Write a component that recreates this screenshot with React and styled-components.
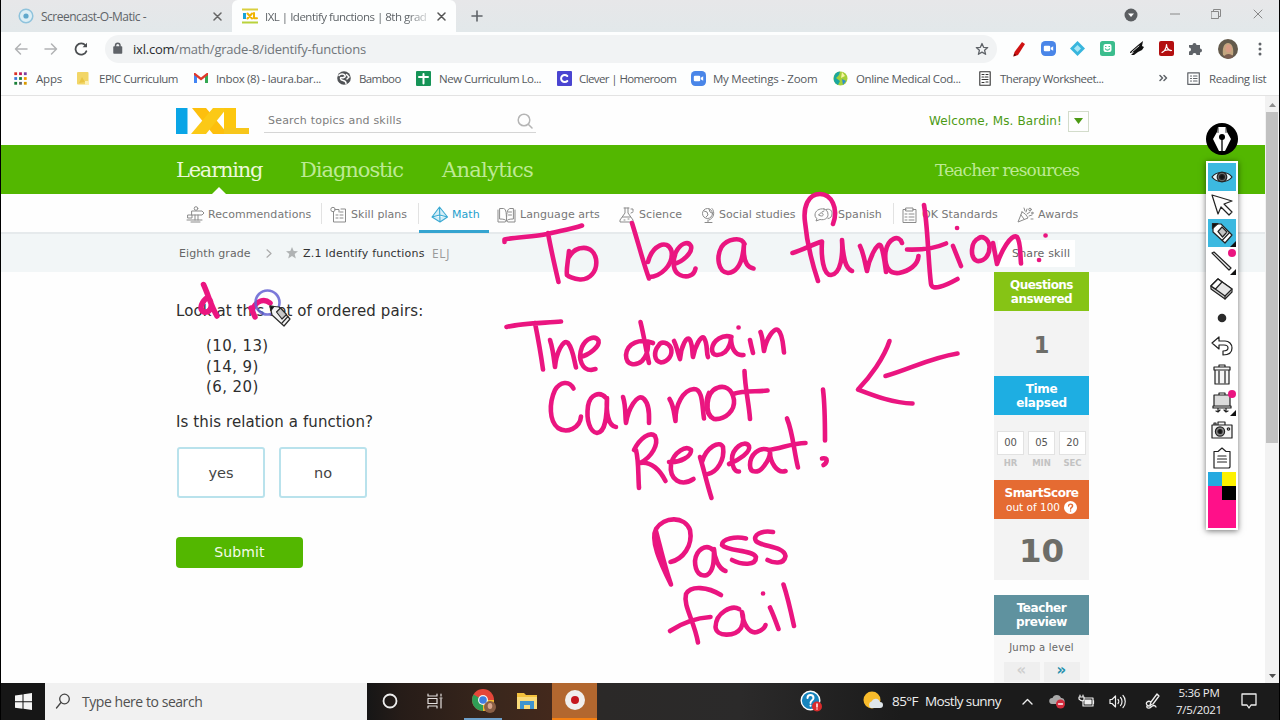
import React from "react";
import styled, { createGlobalStyle, css } from "styled-components";

const Global = createGlobalStyle`
  * { box-sizing: border-box; }
  html, body { margin: 0; padding: 0; background: #fff; overflow: hidden; }
  svg { display: block; flex: none; }
  button, input { font: inherit; }
`;

const chromeFont = `"Open Sans", "Noto Sans", sans-serif`;
const pageFont = `"DejaVu Sans", Verdana, sans-serif`;
const slabFont = `"DejaVu Serif", "Roboto Slab", serif`;
const pink = "#ea1580";

const Frame = styled.div`
  position: relative;
  display: flex;
  flex-direction: column;
  width: 1280px;
  height: 720px;
  border: solid #000;
  border-width: 0 1px;
  overflow: hidden;
  background: #fefefe;
  white-space: nowrap;
`;

/* ---------- browser chrome ---------- */

const TabStrip = styled.div`
  display: flex;
  height: 32px;
  flex: none;
  background: linear-gradient(#e7e7e9, #e2e8ea);
  font-family: ${chromeFont};
  font-size: 12px;
  color: #5f6468;
`;

const Tab = styled.div`
  display: flex;
  align-items: center;
  width: ${(p) => p.$w}px;
  padding: 0 10px 0 ${(p) => p.$pl}px;
  gap: 7px;
  font-size: ${(p) => p.$size || 12}px;
  letter-spacing: ${(p) => p.$ls || 0}px;
  ${(p) => p.$active && css`background: #fdfefe; border-radius: 6px 6px 0 0;`}
`;

const TabTitle = styled.span`
  flex: 1;
  ${(p) => p.$fade && css`mask-image: linear-gradient(90deg, #000 86%, rgba(0, 0, 0, 0.25) 98%);`}
`;

const NewTab = styled.div`
  display: flex;
  align-items: center;
  padding-left: 15px;
  flex: 1;
`;

const WindowButtons = styled.div`
  display: flex;
  align-items: center;
  justify-content: space-between;
  width: 155px;
  padding-right: 16px;
  height: 28px;
`;

const Toolbar = styled.div`
  display: flex;
  align-items: center;
  height: 33px;
  flex: none;
  padding-left: 13px;
  background: #fdfefe;
`;

const NavIcons = styled.div`
  display: flex;
  align-items: center;
  gap: 16px;
  width: 91px;
`;

const AddressBar = styled.div`
  display: flex;
  align-items: center;
  width: 892px;
  height: 28px;
  border-radius: 14px;
  background: #f1f3f4;
  padding: 0 8px 0 8px;
  gap: 10px;
  font-family: ${chromeFont};
  font-size: 13px;
  letter-spacing: -0.22px;
  color: #70757a;
`;

const Url = styled.span`
  flex: 1;
  b { font-weight: 400; color: #2a2d30; }
`;

const Extensions = styled.div`
  display: flex;
  align-items: center;
  justify-content: space-between;
  width: 271px;
  padding-left: 16px;
`;

const Bookmarks = styled.div`
  display: flex;
  align-items: center;
  height: 31px;
  flex: none;
  padding-left: 13px;
  background: #fdfefe;
  border-bottom: 1px solid #e3e3e3;
  padding-bottom: 4px;
  font-family: ${chromeFont};
  font-size: 11.5px;
  color: #55595d;
`;

const Bookmark = styled.div`
  display: flex;
  align-items: center;
  width: ${(p) => p.$w}px;
  letter-spacing: ${(p) => p.$ls || 0}px;
`;

const BookmarkIcon = styled.span`
  width: ${(p) => p.$w}px;
  flex: none;
`;

/* ---------- site ---------- */

const Viewport = styled.div`
  display: flex;
  flex: 1;
  min-height: 0;
  background: #fefefe;
`;

const Page = styled.main`
  flex: 1;
  display: flex;
  flex-direction: column;
  min-width: 0;
  font-family: ${pageFont};
  font-size: 11px;
  color: #666;
`;

const SiteHeader = styled.header`
  display: flex;
  height: 49px;
  flex: none;
  padding: 12px 0 0 175px;
`;

const SearchField = styled.div`
  display: flex;
  align-items: center;
  justify-content: space-between;
  width: 272px;
  height: 25px;
  margin-left: 15px;
  padding: 1px 3px 0 4px;
  border-bottom: 1px solid #d5d5d5;
  color: #7d7d7d;
  letter-spacing: 0.2px;
`;

const Welcome = styled.div`
  display: flex;
  align-items: center;
  gap: 6px;
  height: 26px;
  margin-left: 393px;
  font-size: 12px;
  letter-spacing: 0.13px;
  color: #4c9a14;
`;

const DropButton = styled.span`
  display: grid;
  place-items: center;
  width: 21px;
  height: 21px;
  border: 1px solid #d3dccb;
`;

const GreenNav = styled.nav`
  display: flex;
  height: 49px;
  flex: none;
  padding-left: 175px;
  background: #53b700;
  font-family: ${slabFont};
`;

const GreenLink = styled.a`
  display: flex;
  flex-direction: column;
  align-items: flex-start;
  justify-content: space-between;
  width: ${(p) => p.$w}px;
  padding-top: 12px;
  font-size: ${(p) => p.$size || 21}px;
  letter-spacing: ${(p) => p.$ls}px;
  line-height: 27px;
  color: ${(p) => (p.$active ? "#ecf8da" : "#bdea94")};
`;

const Caret = styled.i`
  margin-left: 36px;
  border: solid transparent;
  border-width: 0 7px 7px;
  border-bottom-color: #fefefe;
`;

const SubjectNav = styled.nav`
  display: flex;
  align-items: stretch;
  height: 40px;
  flex: none;
  padding-left: 174px;
  border-bottom: 2px solid #e6eaec;
  letter-spacing: 0.06px;
`;

const Subject = styled.a`
  display: flex;
  align-items: center;
  width: ${(p) => p.$w}px;
  padding: 2px 0 0 ${(p) => p.$pl}px;
  gap: ${(p) => p.$gap}px;
  height: 39px;
  color: #777;
  background: ${(p) => (p.$divider ? "linear-gradient(#e2e2e2,#e2e2e2) right 9px / 1px 21px no-repeat" : "none")};
  ${(p) => p.$active && css`color: #25a0cd; border-bottom: 3px solid #35a4d0; padding-top: 4px;`}
`;

const CrumbBar = styled.div`
  display: flex;
  align-items: center;
  height: 38px;
  flex: none;
  padding-left: 178px;
  background: #f2f6f7;
  color: #666;
`;

const SkillName = styled.span`
  width: 129px;
  color: #333;
  letter-spacing: 0.2px;
`;

const SkillCode = styled.span`
  width: 566px;
  font-family: ${chromeFont};
  font-size: 12px;
  letter-spacing: 0.6px;
  color: #999;
`;

const ShareSkill = styled.span`
  display: flex;
  align-items: center;
  height: 27px;
  padding: 0 5px 0 14px;
  background: #fff;
  letter-spacing: 0.15px;
`;

const Body = styled.div`
  display: flex;
  flex: 1;
  min-height: 0;
  padding-left: 175px;
`;

const Question = styled.section`
  width: 818px;
  padding-top: 29px;
  font-size: 15px;
  line-height: 21px;
  letter-spacing: 0.1px;
  color: #2e2e2e;
`;

const Pairs = styled.ul`
  list-style: none;
  margin: 14px 0;
  padding-left: 30px;
  line-height: 20.6px;
  letter-spacing: 0.4px;
`;

const Answers = styled.div`
  display: flex;
  gap: 14px;
  margin: 14px 0 39px 1px;
`;

const Answer = styled.button`
  width: 88px;
  height: 51px;
  border: 2px solid #b9e2ec;
  border-radius: 3px;
  background: #fff;
  padding: 2px 0 0;
  color: #444;
  font-size: 14.5px;
`;

const Submit = styled.button`
  width: 127px;
  height: 31px;
  border: 0;
  border-radius: 4px;
  background: #53b700;
  color: #f4fbe9;
  padding: 1px 0 0;
  font-size: 14px;
  letter-spacing: 0.1px;
`;

const Stats = styled.aside`
  width: 95px;
  display: flex;
  flex-direction: column;
  text-align: center;
`;

const StatHead = styled.div`
  height: ${(p) => p.$h || 39}px;
  flex: none;
  padding-top: 6px;
  background: ${(p) => p.$bg};
  color: #fff;
  font-weight: 700;
  font-size: 12px;
  letter-spacing: ${(p) => p.$ls || -0.55}px;
  line-height: 14px;
`;

const OutOf = styled.div`
  display: flex;
  justify-content: center;
  align-items: center;
  gap: 4px;
  font-weight: 400;
  font-size: 10.5px;
  letter-spacing: 0;
`;

const StatBody = styled.div`
  display: flex;
  justify-content: center;
  align-items: center;
  height: ${(p) => p.$h}px;
  flex: none;
  margin-bottom: ${(p) => p.$mb || 0}px;
  background: #f3f3f3;
  color: #6d6d68;
  font-weight: 700;
  font-size: ${(p) => p.$size}px;
  padding-top: 3px;
`;

const Timer = styled.div`
  display: flex;
  gap: 4px;
  padding-top: 5px;
`;

const TimeUnit = styled.div`
  width: 27px;
  font-size: 8.5px;
  color: #c2c2c2;
  line-height: 17px;
`;

const TimeBox = styled.div`
  height: 24px;
  border: 1px solid #e2e2e2;
  background: #fff;
  font-size: 10px;
  line-height: 22px;
  font-weight: 400;
  color: #555;
`;

const Jump = styled.div`
  flex: 1;
  background: #f7f7f7;
  padding-top: 6px;
  font-size: 10px;
  line-height: 14px;
  letter-spacing: 0.25px;
`;

const JumpButtons = styled.div`
  display: flex;
  gap: 4px;
  justify-content: center;
  margin-top: 7px;
`;

const JumpButton = styled.span`
  width: 36px;
  height: 20px;
  background: #efefef;
  color: ${(p) => p.$c};
  font-weight: 700;
  font-size: 15px;
  line-height: 16px;
`;

const Scrollbar = styled.div`
  display: flex;
  flex-direction: column;
  align-items: center;
  width: 14px;
  background: #f2f2f2;
  padding: 7px 0 5px;
`;

const Thumb = styled.div`
  width: 12px;
  height: 331px;
  margin: 5px 0 auto;
  background: #c1c1c1;
`;

/* ---------- annotation layer ---------- */

const Ink = styled.svg`
  position: absolute;
  left: -1px;
  top: 0;
  width: 1280px;
  height: 720px;
  pointer-events: none;
`;

const PenDock = styled.div`
  position: absolute;
  left: 1205px;
  top: 123px;
  display: flex;
  flex-direction: column;
  align-items: center;
  gap: 6px;
`;

const ToolPanel = styled.div`
  width: 32px;
  padding: 2px;
  background: #fff;
  box-shadow: 0 1px 6px rgba(0, 0, 0, 0.55);
`;

const Tool = styled.div`
  position: relative;
  display: grid;
  place-items: center;
  height: 28.1px;
  background: ${(p) => (p.$on ? "#3cb9e0" : "#fff")};
  ${(p) => p.$more && css`
    &::after {
      content: "";
      position: absolute;
      right: 0;
      bottom: 0;
      border: 3px solid #111;
      border-top-color: transparent;
      border-left-color: transparent;
    }
  `}
  ${(p) => p.$dot && css`
    &::before {
      content: "";
      position: absolute;
      right: 0;
      top: 2px;
      width: 8px;
      height: 8px;
      border-radius: 50%;
      background: ${pink};
    }
  `}
`;

const Palette = styled.div`
  display: grid;
  grid-template: 14px 14px 28px / 14px 14px;
  background: #ff1089;
`;

const Swatch = styled.i`
  background: ${(p) => p.$c};
`;

/* ---------- taskbar ---------- */

const Taskbar = styled.footer`
  display: flex;
  height: 37.5px;
  flex: none;
  background: linear-gradient(90deg, #161616 0, #161616 366px, #261c18 400px, #3b271c 500px, #45291c 560px, #2b2928 600px, #2b2a2a 740px, #1b1b1b 900px);
  font-family: ${chromeFont};
  color: #eee;
`;

const Start = styled.div`
  display: grid;
  place-items: center;
  width: 44px;
`;

const TaskSearch = styled.div`
  display: flex;
  align-items: center;
  gap: 11px;
  width: 322px;
  padding-left: 10px;
  background: #f1f1f1;
  color: #505050;
  font-size: 14px;
  letter-spacing: -0.45px;
`;

const TaskApp = styled.div`
  display: grid;
  place-items: center;
  width: ${(p) => p.$w}px;
  background: ${(p) => p.$bg || "none"};
  border-bottom: ${(p) => (p.$bar ? `2px solid ${p.$bar}` : "0")};
`;

const Tray = styled.div`
  display: flex;
  align-items: center;
  margin-left: auto;
  padding-right: 22px;
  font-size: 13.5px;
`;

const Slot = styled.div`
  display: flex;
  justify-content: ${(p) => p.$j || "flex-start"};
  width: ${(p) => p.$w}px;
  letter-spacing: ${(p) => p.$ls || 0}px;
`;

const Clock = styled.div`
  width: 61px;
  padding-left: 3px;
  text-align: center;
  font-size: 11.5px;
  letter-spacing: -0.25px;
  line-height: 17px;
`;

/* ---------- drawings ---------- */

const S = ({ w = 16, h = w, box, c = "#5f6368", sw = 1.5, f = "none", children }) => (
  <svg width={w} height={h} viewBox={box || `0 0 ${w} ${h}`} fill={f} stroke={c} strokeWidth={sw} strokeLinecap="round" strokeLinejoin="round">
    {children}
  </svg>
);

const Cross = ({ s = 8, c, sw }) => (
  <S w={s} c={c} sw={sw}><path d={`M1 1L${s - 1} ${s - 1}M${s - 1} 1L1 ${s - 1}`} /></S>
);

const ZoomLogo = ({ s = 14 }) => (
  <S w={s} box="0 0 16 16" c="none">
    <rect width="16" height="16" rx="4.5" fill="#4a86e8" />
    <rect x="3" y="5" width="6.8" height="6" rx="1.2" fill="#fff" />
    <path d="M10.4 7.3L13 5.5v5l-2.6-1.8z" fill="#fff" />
  </S>
);

const bookmarks = [
  { text: "Apps", w: 63, iw: 22, ls: -0.2, icon: (
    <S w={13} c="none">
      {["#d93025", "#c2185b", "#7b3f9e", "#3c78d8", "#188038", "#f29900", "#188038", "#5f6368", "#d99a00"].map((c, i) => (
        <rect key={i} x={(i % 3) * 4.8 + 0.3} y={Math.floor(i / 3) * 4.8 + 0.3} width="2.8" height="2.8" fill={c} />
      ))}
    </S>) },
  { text: "EPIC Curriculum", w: 117, iw: 22, ls: -0.5, icon: (
    <S w={12} h={13} c="none"><rect width="11.5" height="12.5" rx="1" fill="#f2d667" /><path d="M8 9h4v4H8z" fill="#fdf0b4" /><path d="M2 11l3-6 3 5z" fill="#e9c545" /></S>) },
  { text: "Inbox (8) - laura.bar...", w: 143, iw: 22, ls: -0.37, icon: (
    <S w={14} h={10} c="none"><path d="M0 1v9h3V4z" fill="#4285f4" /><path d="M11 4v6h3V1z" fill="#34a853" /><path d="M0 0l1-.2L7 4.6 13-.2 14 0v2L7 7.5 0 2z" fill="#e0382c" /></S>) },
  { text: "Bamboo", w: 79, iw: 22, ls: -0.6, icon: (
    <S w={14} c="none"><circle cx="7" cy="7" r="6.8" fill="#505356" /><path d="M2 4.5C4 2 7 3 8 4.5S6 7 4.5 6.6 3 9 6 9.5s3 3 3 3M9.5 3.5L12 6 10 8" stroke="#fff" strokeWidth="1.5" /></S>) },
  { text: "New Curriculum Lo...", w: 141, iw: 23, ls: -0.48, icon: (
    <S w={15} c="#fff" sw="2"><rect width="15" height="15" rx="1" fill="#159457" stroke="none" /><path d="M7.5 3v9.5M3 6h9" /></S>) },
  { text: "Clever | Homeroom", w: 134, iw: 22, ls: -0.6, icon: (
    <S w={15} c="#fff" sw="2"><rect width="15" height="15" rx="1" fill="#4a45d1" stroke="none" /><path d="M10.3 5a3.6 3.6 0 1 0 0 5" /></S>) },
  { text: "My Meetings - Zoom", w: 142, iw: 22, ls: -0.25, icon: <ZoomLogo s={15} /> },
  { text: "Online Medical Cod...", w: 146, iw: 23, ls: -0.4, icon: (
    <S w={15} c="none"><circle cx="7.5" cy="7.5" r="7" fill="#a4cf3a" /><path d="M7 .6A7 7 0 0 0 5 14l2-4-4-3 3-3z" fill="#1ba7a0" /><path d="M9 8l4 2-3 4z" fill="#2b8fd0" /><path d="M9 1l3 4-4 2z" fill="#f7f3a0" /></S>) },
  { text: "Therapy Worksheet...", w: 180, iw: 21, ls: -0.5, icon: (
    <S w={12} h={15} c="#333" sw="1.1"><path d="M.8.8h10.4v13.4H.8zM3 3.5h2M7 3.5h2M3 6h1.5M6 6h3M3 8.500h6M3 11.5h2M7 11h2" /></S>) },
];

const subjectIcons = {
  rec: <S w={18} h={17} c="#8b8b8b" sw="1"><circle cx="10" cy="2.5" r="1.8" /><path d="M6 5h10l2 2-2 2H6zM9 9v5M12 9v5M2 9h4v3H2zM1 14h15M5 16h9" /></S>,
  plans: <S w={16} h={17} c="#8b8b8b" sw="1"><circle cx="3" cy="3.5" r="2.2" /><path d="M5.5 3.5H9V6M3.5 6v10h12V3H11M6 9h2M10 9h3M6 12h2M10 12h3M10 6h3" /></S>,
  math: <S w={17} h={17} c="#3aa9d3" sw="1.1"><path d="M8.5 1L1 11l8 5 7.5-5zM8.5 1L9 16M1 11l7.7-2 7.8 2" fill="#d5eef7" /></S>,
  lang: <S w={19} h={16} c="#8b8b8b" sw="1"><path d="M1 3v12h7l1.5-1 1.5 1h7V3M3 1.5h3.5c2 .5 3 2 3 12.500-1-1.500-3-2-6.500-2zM16 1.500h-3c-2 .500-3.500 2-3.500 12.500 1-1.500 3-2 6.500-2zM11.500 5h3M11.500 8h3" /></S>,
  sci: <S w={15} h={16} c="#8b8b8b" sw="1"><path d="M5 1h5M6 1v5L1 13v2h13v-2L9 6V1M3.500 10h8M12 2h2v2M5 13h1M9 12h1M12 6l2-1" /></S>,
  soc: <S w={14} h={16} c="#8b8b8b" sw="1"><circle cx="6.500" cy="6.500" r="5" /><path d="M11 1.500a7 7 0 0 1-3 11.500M7 13v2M4 15.500h7M3 4l3 1 1 3-2 2M8 2l1 3 2 1" /></S>,
  spa: <S w={19} h={14} c="#8b8b8b" sw="1"><path d="M10 1c-5-1-9 2-9 6 0 2 1 3 2 3.500L2 13l4-1.500c5 1 8-1.500 8-5S12 1.500 10 1zM12 1.500C16 0 18.500 3 18 6s-1 4-4 4.500M5 7c0-2 3-3 4-1s-2 3-4 1zM8 4l2-1" /></S>,
  ok: <S w={15} h={16} c="#8b8b8b" sw="1"><path d="M4 2.500H1v13h13v-13h-3M4 1h7v3H4zM3 7h2M7 7h5M3 10h2M7 10h5M3 13h2M7 13h5" /></S>,
  aw: <S w={17} h={16} c="#8b8b8b" sw="1"><path d="M5 5L1 15l10-4C10 9 8 6 5 5zM4 8l3 4M7 1l1 3M10 2L9 5M13 5l-3 2M12 9l3-1M14 12h2" /><circle cx="13" cy="2.500" r="1.300" /><circle cx="15.300" cy="6" r=".8" /></S>,
};

const subjects = [
  { k: "rec", text: "Recommendations", w: 147, pl: 11, gap: 4, divider: true },
  { k: "plans", text: "Skill plans", w: 97, pl: 8, gap: 5, divider: true },
  { k: "math", text: "Math", w: 70, pl: 12, gap: 4, active: true },
  { k: "lang", text: "Language arts", w: 121, pl: 8, gap: 4 },
  { k: "sci", text: "Science", w: 83, pl: 9, gap: 5 },
  { k: "soc", text: "Social studies", w: 110, pl: 8, gap: 4 },
  { k: "spa", text: "Spanish", w: 91, pl: 11, gap: 5, divider: true },
  { k: "ok", text: "OK Standards", w: 113, pl: 8, gap: 5 },
  { k: "aw", text: "Awards", w: 80, pl: 10, gap: 4 },
];

const strokes = [
  "M504.500 242V239.500C515 237 535 237 547 234S572 229 582 225.500M548 233C551 250 555 267 558.500 282",
  "M569 251C568 262 566 270 567 275M569 257C576 245 593 244 596 259C598 272 589 280 580 279.500C573 279 568 276 567 275",
  "M632 223C638 242 643 262 649 278.500M648 262C652 246 667 238 671.500 251C674 265 660 277 649 277",
  "M674 264C682 262 693 253 691 246C688 240 680 244 676 252C672 262 673 272 680 275C687 278 694 276 695.500 268.500",
  "M744.500 244C741 236 727 239 721.500 247C716 257 718 272 728 273C738 272 743 260 744 244C743 257 745 267 753.500 268.500",
  "M833 224C839 208 831 194 820 194C808 194 803 207 805 222C807 244 812 263 818 281",
  "M792.500 253C803 250 813 244 822 241.500C821 256 823 275 831 275C841 274 843 255 842 240C843 256 845 269 852 271",
  "M860 246C864 254 865 264 867 271C869 259 878 240 881 246C884 254 885 264 886 272",
  "M902 243C899 234 888 238 885.500 252C884 268 890 274 899 273C909 271 918 265 918.500 256",
  "M924 205C928 228 928 260 931 284C932 291 945 286 957.500 279M907 249.500C922 250 936 248 946 243.500",
  "M953 246L961 266M957 228h.1M1045.500 235.500h.1M1039 260h.1",
  "M979 238C970 242 970 258 977 261C985 262 990 254 989.500 246C988 238 982 236 979 238",
  "M993 243L997 264C1001 252 1011 233 1017 237C1021 242 1020 254 1021 263.500",
  "M506.500 327C522 323 545 323 561 321.500M535 323C538 338 541 355 543 369.500",
  "M550 340C553 349 554 359 555 367C556 354 563 338 568 343C573 349 574 360 576 367.500",
  "M580 357C590 355 600 346 598.500 340.500C595 335 586 338 582 347C577 360 583 370 591 370L595.500 369",
  "M640.500 322C644 336 646 350 649 363M653 343C640 338 627 343 626 355C626 366 636 366 642 361C646 357 648 350 648 345",
  "M659 345C653 352 654 361 661 362.500C668 362 673 355 671 348C668 342 661 341 659 345",
  "M674 341C677 347 678 354 680 359C681 347 687 334 690 340C693 346 692 353 693 357C695 346 701 335 704 338C708 344 706 352 708 357",
  "M731.500 337C723 334 713 340 712 349C712 357 720 356 725 352C730 347 731 342 731 337C731 348 735 356 743.500 355",
  "M738.500 327.500h.1M750 340C751 345 752 349 753 353M760.500 332C763 338 763 346 764 351C766 339 774 327 778 330C783 334 783 346 784 352.500",
  "M573.500 388.500C569 380 560 382 555 390C549 403 549 421 558 428C567 434 580 428 581 416.500",
  "M606 398C600 391 590 394 588 406C586 420 590 432 597 433C606 432 607 415 607 398C606 412 608 426 616 427",
  "M623 397C626 406 625 416 626 423C628 410 637 392 644 399C650 405 649 416 649 423",
  "M669.500 399C674 406 674 414 675.500 421C675 405 683 390 694 389C703 389 702 406 704 418.500",
  "M717 388C706 392 704 414 714 419C726 420 735 410 734 400C732 388 724 385 717 388M709 393C705 402 706 412 711 417",
  "M744.500 371C745 388 749 404 750 419M733 394C745 390 756 392 767.500 390.500",
  "M636 450C639 462 638 476 639 488M634 450C640 438 650 431 655 436C659 444 652 457 640 463C651 461 660 470 665.500 481",
  "M669 462C680 463 692 456 691 450C686 445 674 452 671 464C669 480 681 487 693.500 479",
  "M700 457C704 470 707 484 711.500 498M702 462C706 447 720 440 723 447C725 460 717 472 708 474",
  "M729 464C739 460 751 452 749 446C744 439 732 449 732 459C732 467 735 472 739 471.500",
  "M769 450C759 446 750 455 750 465C750 474 759 473 764 466C768 461 770 457 770 452C770 462 777 474 785.500 471M769 450C782 448 793 443 805.500 443",
  "M787 418.500C793 433 794 452 798 467.500M823 389.500C825 406 825 424 825 440.500M822 458.500C829 457 827 463 823.500 465",
  "M889.500 341C884 358 870 377 858 389.500C875 396 893 403 912.500 403.500M885.500 376C910 369 930 358 957.500 353.500",
  "M656 531C661 550 665 568 671 584.500C660 562 650 540 656 529C664 516 685 516 690 530C693 546 683 559 670.500 562",
  "M713 550C706 543 696 550 695 561C695 573 701 577 707 575C714 571 714 560 714 549C714 558 719 569 725.500 571",
  "M746 538.500C735 536 722 539 722 545C728 552 752 549 756 557C756 566 742 565 732 560",
  "M773 532C762 530 752 535 756 541C762 547 784 546 785.500 556C784 565 773 563 767.500 560",
  "M721 595C708 587 691 585 686 594C683 606 694 620 698 642.500M670 631C682 623 695 618 710.500 617",
  "M739 609C732 605 716 612 715.500 627C716 637 735 637 741 628C744 622 743 615 742 612C743 625 750 634 757 632C763 630 765 627 765.500 625",
  "M763 593.500h.1M770 607.500C773 614 776 622 778.500 629M783.500 584.500C788 598 791 612 794 626",
];

const pk = { c: "#222", sw: 1.2 };
const tools = [
  { on: true, icon: <S w={22} {...pk}><path d="M1 11C5 5 17 5 21 11C17 17 5 17 1 11z" fill="#e8f7fc" /><circle cx="11" cy="11" r="4.800" fill="#666" /><circle cx="11" cy="11" r="2.400" fill="#111" /></S> },
  { icon: <S w={22} {...pk}><path d="M1 1l20 6-8 3 8 8-3 3-8-8-3 7z" fill="#fff" /></S> },
  { on: true, more: true, icon: <S w={22} {...pk}><path d="M2 2h8l11 11-7 8L2 10z" fill="#fff" /><path d="M1.500 1.500H7l-5.500 5z" fill="#111" /><path d="M7 9.500L11 5l5 5-4.500 5z" fill="#c4c4c4" /><path d="M18.500 10.500l-7 7.500" /></S> },
  { more: true, dot: true, icon: <S w={22} {...pk}><path d="M1 3l2-1 17 16-2 2z" fill="#eee" /></S> },
  { icon: <S w={24} {...pk}><path d="M1 9l7-7 14 10v3l-7 7L1 12z" fill="#ccc" /><path d="M1 9l7-7 14 10-7 7z" fill="#e6e6e6" /><path d="M1 9l7-7 4 3-6.500 7z" fill="#fff" /><path d="M15 19v3" /></S> },
  { icon: <S w={10} c="none"><circle cx="5" cy="5" r="4.300" fill="#2b2b2b" /></S> },
  { icon: <S w={22} {...pk}><path d="M1 8l7-6v4h6c4 0 7 3 7 7s-3 7-9 7v-4c4 0 5-1 5-3s-1-3-4-3H8v4z" fill="#fff" /></S> },
  { icon: <S w={20} h={22} {...pk}><path d="M3 7v14h14V7M2 4h16v3H2zM7 4V2h6v2" fill="#f5f5f5" /><path d="M7 8v12M13 8v12" /></S> },
  { more: true, dot: true, icon: <S w={20} h={22} {...pk}><path d="M7 4V2h6v2M6 17v4M14 17v4M4 20l2 1 2-2M12 19l2 2 2-1" /><path d="M2 4h16v11H2zM1 15h18v2H1z" fill="#dcdcdc" /></S> },
  { icon: <S w={22} h={18} {...pk}><path d="M1 4h20v13H1zM7 4V1h7v3M3 4V2h2v2" fill="#f4f4f4" /><circle cx="9" cy="10.500" r="4.600" fill="#888" /><circle cx="9" cy="10.500" r="2" fill="#111" /><circle cx="17.500" cy="8" r="1.200" /></S> },
  { icon: <S w={18} h={22} {...pk}><path d="M1 4.500h4L9 1l4 3.500h4V20l-1 1H1z" fill="#fff" /><path d="M5 9h8M4.500 12h9M4.500 15h9" /></S> },
];

export default function App() {
  return (
    <Frame>
      <Global />
      <TabStrip>
        <Tab $w={231} $pl={17} $ls={-0.5}>
          <S w={16} c="#8fc3dc" sw="1.500"><circle cx="8" cy="8" r="6.800" fill="#dceef5" /><circle cx="8" cy="8" r="2.600" fill="#5fa8cc" stroke="none" /></S>
          <TabTitle>Screencast-O-Matic -</TabTitle>
          <Cross s={9} c="#666" />
        </Tab>
        <Tab $w={224} $pl={10} $size={11.5} $ls={-0.5} $active>
          <S w={16} c="none">
            <rect width="16" height="2" y=".5" fill="#d9cf3f" /><rect width="16" height="2" y="13.500" fill="#b9d23c" />
            <rect x="1" y="5" width="3" height="6" fill="#18a3d8" />
            <path d="M5.500 5.500l4.500 5M10 5.500l-4.500 5M12 5v5.300h3" stroke="#f0b400" strokeWidth="2" />
          </S>
          <TabTitle $fade>IXL | Identify functions | 8th grad</TabTitle>
          <Cross s={9} c="#555" />
        </Tab>
        <NewTab><S w={12} sw="1.600"><path d="M6 1v10M1 6h10" /></S></NewTab>
        <WindowButtons>
          <S w={14} h={16} c="none"><circle cx="7" cy="9" r="6.500" fill="#5b5e61" /><path d="M4 7.500h6L7 11z" fill="#fff" /></S>
          <S w={10} c="#888" sw="1"><path d="M0 5h10" /></S>
          <S w={10} c="#888" sw="1"><path d="M.5 2.500h7v7h-7zM2.500 2.500v-2h7v7h-2" /></S>
          <Cross s={10} c="#888" sw="1" />
        </WindowButtons>
      </TabStrip>

      <Toolbar>
        <NavIcons>
          <S w={14} c="#b1b3b5"><path d="M13 7H1.500M6.500 2l-5 5 5 5" /></S>
          <S w={14} c="#b1b3b5"><path d="M1 7h11.500M7.500 2l5 5-5 5" /></S>
          <S w={14} c="#4b4e51" sw="1.800"><path d="M12.300 9.300A5.600 5.600 0 1 1 11.500 3.500" /><path d="M13 .8v4.400H8.600z" fill="#4b4e51" stroke="none" /></S>
        </NavIcons>
        <AddressBar>
          <S w={10} h={13} c="#5f6368"><rect x="1" y="5" width="7.500" height="6" fill="#5f6368" /><path d="M2.500 5V3.500a2.200 2.200 0 0 1 4.500 0V5" /></S>
          <Url><b>ixl.com</b>/math/grade-8/identify-functions</Url>
          <S w={14} c="#5f6368" sw="1.300"><path d="M7 1.500l1.600 3.800 4.100.3-3.100 2.700 1 4L7 10.100l-3.600 2.200 1-4L1.300 5.600l4.100-.3z" /></S>
        </AddressBar>
        <Extensions>
          <S w={13} h={16} c="none"><path d="M9 1l3 2-7 11-4.500 1.500L1.500 11z" fill="#cf1212" /><path d="M1 12.500L.5 15.500 3.500 14z" fill="#600" /></S>
          <ZoomLogo s={15} />
          <S w={15} c="none"><path d="M7.500 0L15 7.500 7.500 15 0 7.500z" fill="#38b6dd" /><path d="M7.500 4L11 7.500 7.500 11 4 7.500z" fill="#a8e6f5" /></S>
          <S w={15} c="none"><rect width="15" height="15" rx="2.500" fill="#3bbd8d" /><rect x="3.500" y="3" width="8" height="8" rx="2" fill="#fff" /><path d="M5.500 5.500h.5M9 5.500h.5M5.500 8c1 1.500 3 1.500 4 0" stroke="#3bbd8d" strokeWidth="1.200" /></S>
          <S w={15} c="none"><path d="M1 11L9 4l5-4-1 5 2 1-2 3-4 2-4 3H2l3-3-4 1z" fill="#111" /><path d="M3 11l7-6" stroke="#fff" strokeWidth=".8" /></S>
          <S w={15} c="#fff" sw="1.200"><rect width="15" height="15" rx="2" fill="#b30f10" stroke="none" /><path d="M3 11.500c2-.5 4.500-4 4.500-8C7.500 7 10 10 12.500 9.500 9.500 8.500 5.500 9 3 11.500z" /></S>
          <S w={15} c="none"><path d="M1 4h3.500a2 2 0 1 1 4 0H12v3.500a2 2 0 1 1 0 4V14H8.500a2 2 0 1 0-4 0H1v-3.500a2 2 0 1 0 0-4z" fill="#5f6368" /></S>
          <S w={20} c="none"><circle cx="10" cy="10" r="10" fill="#635a4c" /><path d="M5 16C4 9 6 4 10 4s6 5 5 12c-3 2-7 2-10 0z" fill="#c3a67f" /><ellipse cx="10.500" cy="9.500" rx="3" ry="4" fill="#d79b84" /><path d="M6 18c1-4 8-4 9 0-2 2-7 2-9 0z" fill="#7a5d50" /></S>
          <S w={16} c="none" f="#5f6368"><circle cx="8" cy="3" r="1.500" /><circle cx="8" cy="8" r="1.500" /><circle cx="8" cy="13" r="1.500" /></S>
        </Extensions>
      </Toolbar>

      <Bookmarks>
        {bookmarks.map((b) => (
          <Bookmark key={b.text} $w={b.w} $ls={b.ls}>
            <BookmarkIcon $w={b.iw}>{b.icon}</BookmarkIcon>
            {b.text}
          </Bookmark>
        ))}
        <Bookmark $w={28}>
          <S w={9} h={8}><path d="M1 1.500L3.500 4 1 6.500M5 1.500L7.500 4 5 6.500" /></S>
        </Bookmark>
        <Bookmark $w={80} $ls={-0.35}>
          <BookmarkIcon $w={22}><S w={13} sw="1.200"><path d="M.8.8h11.500v11.500H.8zM3.500 4h1M6.500 4h3.500M3.500 6.500h1M6.500 6.500h3.500M3.500 9h1M6.500 9h3.500" /></S></BookmarkIcon>
          Reading list
        </Bookmark>
      </Bookmarks>

      <Viewport>
        <Page>
          <SiteHeader>
            <S w={73} h={26} c="none">
              <rect width="11.500" height="26" fill="#0aa5e6" />
              <path d="M16 0h14l22 26H37z" fill="#fdbf0d" />
              <path d="M37 0h14L30 26H15z" fill="#fbc916" />
              <rect x="48" width="12" height="26" fill="#fdc70f" />
              <rect x="48" y="20" width="25" height="6" fill="#f7c61b" />
            </S>
            <SearchField>
              <span>Search topics and skills</span>
              <S w={16} c="#b5b5b5" sw="1.500"><circle cx="7" cy="7" r="5.800" /><path d="M11.500 11.500l3.500 3.500" /></S>
            </SearchField>
            <Welcome>
              Welcome, Ms. Bardin!
              <DropButton><S w={9} h={6} c="none"><path d="M0 0h9L4.500 6z" fill="#4c9a14" /></S></DropButton>
            </Welcome>
          </SiteHeader>

          <GreenNav>
            <GreenLink $w={124} $ls={-1.25} $active>Learning<Caret /></GreenLink>
            <GreenLink $w={142} $ls={-1.05}>Diagnostic</GreenLink>
            <GreenLink $w={493} $ls={-0.7}>Analytics</GreenLink>
            <GreenLink $w={150} $size={17} $ls={-0.87}>Teacher resources</GreenLink>
          </GreenNav>

          <SubjectNav>
            {subjects.map((s) => (
              <Subject key={s.k} $w={s.w} $pl={s.pl} $gap={s.gap} $divider={s.divider} $active={s.active}>
                {subjectIcons[s.k]}
                {s.text}
              </Subject>
            ))}
          </SubjectNav>

          <CrumbBar>
            <Slot $w={87} $ls={0.08}>Eighth grade</Slot>
            <Slot $w={20}><S w={6} h={9} c="#aaa" sw="1.200"><path d="M1 .8l4 3.700-4 3.700" /></S></Slot>
            <Slot $w={17}><S w={12} c="none"><path d="M6 0l1.700 4 4.300.3-3.300 2.800 1.100 4.300L6 9.100l-3.800 2.300 1.100-4.300L0 4.300 4.300 4z" fill="#b0b3b4" /></S></Slot>
            <SkillName>Z.1 Identify functions</SkillName>
            <SkillCode>ELJ</SkillCode>
            <ShareSkill>Share skill</ShareSkill>
          </CrumbBar>

          <Body>
            <Question>
              <div>Look at this set of ordered pairs:</div>
              <Pairs>
                <li>(10, 13)</li>
                <li>(14, 9)</li>
                <li>(6, 20)</li>
              </Pairs>
              <div>Is this relation a function?</div>
              <Answers>
                <Answer>yes</Answer>
                <Answer>no</Answer>
              </Answers>
              <Submit>Submit</Submit>
            </Question>
            <Stats>
              <StatHead $bg="#86c415">Questions<br />answered</StatHead>
              <StatBody $h={65} $size={22.5}>1</StatBody>
              <StatHead $bg="#1eaee2" $ls={-0.35}>Time<br />elapsed</StatHead>
              <StatBody $h={65} $size={10}>
                <Timer>
                  {[["00", "HR"], ["05", "MIN"], ["20", "SEC"]].map(([n, u]) => (
                    <TimeUnit key={u}><TimeBox>{n}</TimeBox>{u}</TimeUnit>
                  ))}
                </Timer>
              </StatBody>
              <StatHead $bg="#e56b32" $ls={-0.5}>
                SmartScore
                <OutOf>
                  out of 100
                  <S w={13} c="none"><circle cx="6.500" cy="6.500" r="6.500" fill="#fff" /><path d="M4.600 5c0-2.500 4-2.500 4 0 0 1.400-2 1.400-2 3M6.600 10v.1" stroke="#e56b32" strokeWidth="1.400" /></S>
                </OutOf>
              </StatHead>
              <StatBody $h={61} $mb={15} $size={32.5}>10</StatBody>
              <StatHead $h={40} $bg="#5f929f" $ls={-0.4}>Teacher<br />preview</StatHead>
              <Jump>
                Jump a level
                <JumpButtons>
                  <JumpButton $c="#cfcfcf">«</JumpButton>
                  <JumpButton $c="#2490ad">»</JumpButton>
                </JumpButtons>
              </Jump>
            </Stats>
          </Body>
        </Page>
        <Scrollbar>
          <S w={7} h={4} c="none"><path d="M0 4h7L3.500 0z" fill="#8f8f8f" /></S>
          <Thumb />
          <S w={7} h={4} c="none"><path d="M0 0h7L3.500 4z" fill="#505050" /></S>
        </Scrollbar>
      </Viewport>

      <Taskbar>
        <Start>
          <S w={17} c="none" f="#f5f5f5"><path d="M0 2.500l7.500-1v6.700H0zM8.500 1.300L17 0v8.200H8.500zM0 9.200h7.500v6.500l-7.500-1zM8.500 9.200H17V17l-8.500-1.200z" /></S>
        </Start>
        <TaskSearch>
          <S w={16} c="#444" sw="1.300"><circle cx="9.500" cy="6" r="4.800" /><path d="M6 9.500L1.500 15" /></S>
          Type here to search
        </TaskSearch>
        <TaskApp $w={46}><S w={16} c="#eee" sw="1.800"><circle cx="8" cy="8" r="6.500" /></S></TaskApp>
        <TaskApp $w={44}><S w={16} c="#e4e0de" sw="1.200"><path d="M1 1v2h9V1M1 15v-2h9v2M1 5.500h9v5H1zM14 1v2M14 6v9M13 5h2" /></S></TaskApp>
        <TaskApp $w={7} />
        <TaskApp $w={38} $bar="#6d9fc9">
          <S w={26} h={26} c="none">
            <circle cx="13" cy="13" r="11" fill="#e5473a" /><path d="M13 13L3.500 7.500A11 11 0 0 0 13 24z" fill="#2f9e55" /><path d="M13 13h11a11 11 0 0 1-11 11z" fill="#f0bd2e" />
            <circle cx="13" cy="13" r="5" fill="#f4f4f4" /><circle cx="13" cy="13" r="3.800" fill="#3f7fe0" /><circle cx="20" cy="20" r="6" fill="#8a6047" /><ellipse cx="20" cy="19" rx="2.300" ry="3" fill="#d8a58c" />
          </S>
        </TaskApp>
        <TaskApp $w={50}>
          <S w={20} h={18} c="none"><path d="M0 1h7l2 2h11v14H0z" fill="#f3c13d" /><path d="M0 5h20v12H0z" fill="#fadb7a" /><path d="M3 9h14v8h-4v-4H7v4H3z" fill="#3f94cf" /></S>
        </TaskApp>
        <TaskApp $w={45} $bg="#b2672f" $bar="#f58012">
          <S w={20} c="none"><circle cx="10" cy="10" r="10" fill="#f0efed" /><circle cx="10" cy="10" r="4" fill="#c5171d" /></S>
        </TaskApp>
        <Tray>
          <Slot $w={63}>
            <S w={22} c="none"><circle cx="10.500" cy="10.500" r="9.300" fill="#1784bd" stroke="#fff" strokeWidth="1.400" /><path d="M7.500 8c0-4 6-4 6 0 0 2.200-3 2.200-3 5M10.500 15.500v.2" stroke="#fff" strokeWidth="2" /><circle cx="17" cy="16.500" r="5" fill="#d92c2c" /><path d="M17 14v3M17 19v.1" stroke="#fff" strokeWidth="1.500" /></S>
          </Slot>
          <Slot $w={29}>
            <S w={20} c="none"><circle cx="9" cy="9" r="8.500" fill="#f8bb2b" /><path d="M8 17a3.500 3.500 0 0 1 .5-6.500A4.500 4.500 0 0 1 17 11a3 3 0 0 1 0 6z" fill="#dfe6ea" /></S>
          </Slot>
          <Slot $w={33} $ls={-0.55}>85°F</Slot>
          <Slot $w={97} $ls={-0.62}>Mostly sunny</Slot>
          <Slot $w={27}><S w={11} h={7} c="#eee" sw="1.400"><path d="M1 6l4.500-4.500L10 6" /></S></Slot>
          <Slot $w={29}><S w={17} h={15} c="none"><path d="M3 10a3 3 0 0 1 .5-6A4.500 4.500 0 0 1 12 4a3 3 0 0 1 1 6z" fill="#a8a8a8" /><circle cx="11.500" cy="10" r="4.500" fill="#d22b3c" /><path d="M9.500 10h4" stroke="#fff" strokeWidth="1.400" /></S></Slot>
          <Slot $w={31}><S w={17} h={14} c="#eee" sw="1.200"><path d="M5 4h10v8H5zM15.500 6.500v3" /><path d="M7 6h6v4H7z" fill="#eee" /><path d="M1 3h5v3c-2 2-4 0-5-1zM2 1v2M5 1v2" fill="#222" /></S></Slot>
          <Slot $w={36}><S w={17} h={15} c="#eee" sw="1.200"><path d="M1 5.500h2L6.500 2v11L3 9.500H1zM9 5.500c1 1 1 3 0 4M11.500 3.500c2 2 2 6 0 8M14 1.500c3 3 3 9 0 12" /></S></Slot>
          <Slot $w={22}><S w={15} h={17} c="#eee" sw="1.300"><path d="M12 1l2 2-6 8-3 1 1-3zM6 9C3 7 0 10 2 12s4 0 4 0M2 13c-1 2 2 3 4 1s4-2 5 0" /></S></Slot>
          <Clock>5:36 PM<br />7/5/2021</Clock>
          <Slot $w={29} $j="flex-end"><S w={16} h={16} c="#eee" sw="1.300"><path d="M1 1h14v11H10l-2 3-2-3H1z" /></S></Slot>
        </Tray>
      </Taskbar>

      <Ink viewBox="0 0 1280 720" fill="none" stroke={pink} strokeWidth="4.600" strokeLinecap="round" strokeLinejoin="round">
        {strokes.map((d) => <path key={d} d={d} />)}
        <g strokeWidth="5.500">
          <path d="M203.500 284.500C208 294 211 306 217 316M208 297C202 301 198 309 204 312C210 313 213 307 210 300" />
          <path d="M251 308L255 317M253 308C257 301 264 298 270 303" />
        </g>
        <circle cx="267.500" cy="302.500" r="12" stroke="#6462d2" strokeOpacity=".85" strokeWidth="2.600" />
        <g stroke="#2b2b2b" strokeWidth="1.200">
          <path d="M270 306l9 1 11 12-6 7-12-11z" fill="#f4f4f4" />
          <path d="M276.500 312l4-4 6 6.500-4.500 4.500z" fill="#c8c8c8" />
          <path d="M288 316.500l-6 6.500" />
          <path d="M270 306l4 .5-3 4z" fill="#111" />
        </g>
      </Ink>

      <PenDock>
        <S w={32} c="none">
          <circle cx="16" cy="16" r="16" fill="#000" />
          <path d="M12 4h8l1 5 4 7-6 12h-6L7 16l4-7z" fill="#fff" />
          <path d="M16 15v13" stroke="#000" strokeWidth="1.300" /><circle cx="16" cy="14" r="3" fill="#000" />
          <path d="M12 4.500v5M20 4.500v5" stroke="#000" strokeWidth=".8" />
        </S>
        <ToolPanel>
          {tools.map((t, i) => <Tool key={i} $on={t.on} $more={t.more} $dot={t.dot}>{t.icon}</Tool>)}
          <Palette><Swatch $c="#25a9e0" /><Swatch $c="#fdf100" /><Swatch $c="#ff1089" /><Swatch $c="#000" /></Palette>
        </ToolPanel>
      </PenDock>
    </Frame>
  );
}
